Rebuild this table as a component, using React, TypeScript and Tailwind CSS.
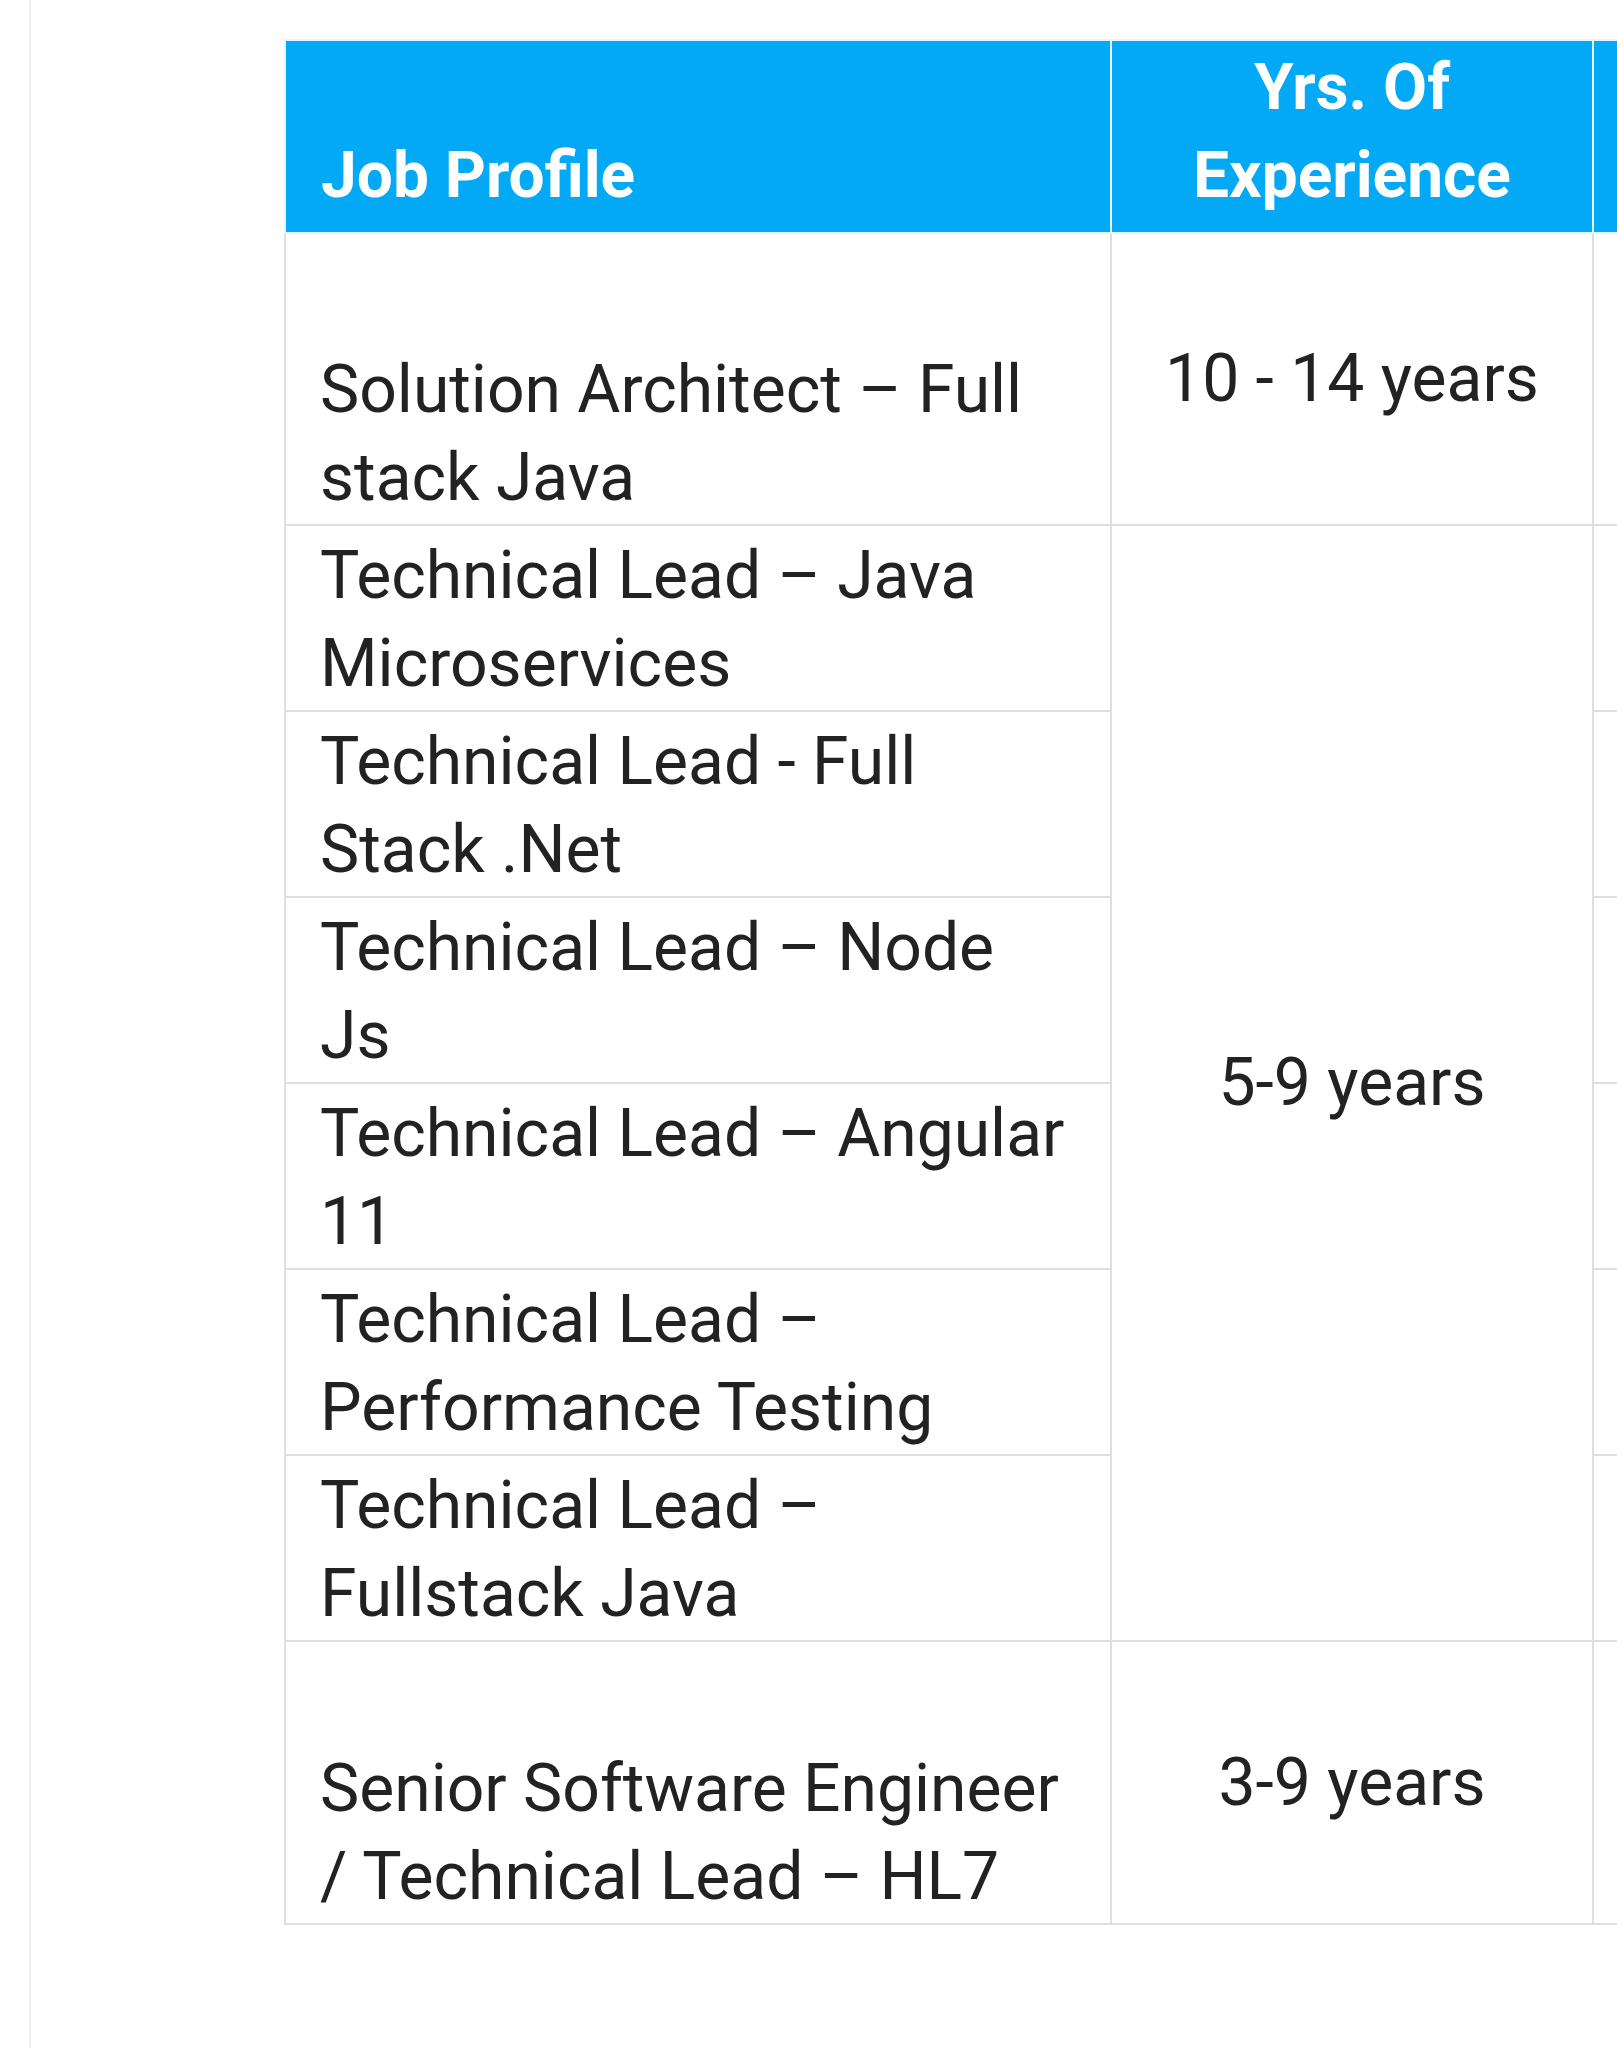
const jobs = [
  "Technical Lead – Java Microservices",
  "Technical Lead - Full Stack .Net",
  "Technical Lead – Node Js",
  "Technical Lead – Angular 11",
  "Technical Lead – Performance Testing",
  "Technical Lead – Fullstack Java",
];

const cell = "border-2 border-[#dedede]";
const jobCell = `${cell} pb-[2px] pl-[34px] pr-[37px] align-bottom`;
const yearsCell = `${cell} text-center align-middle`;

export default function App() {
  return (
    <div className="min-h-screen bg-white font-['Roboto',sans-serif] text-[#222]">
      <div className="ml-[29px] min-h-[2048px] overflow-hidden border-l-2 border-[#efefef] pt-[39px] pl-[253px]">
        <table className="w-[1500px] table-fixed border-collapse text-[66px] leading-[88px]">
          <colgroup>
            <col className="w-[826px]" />
            <col className="w-[482px]" />
            <col />
          </colgroup>
          <thead>
            <tr className="h-[193px] bg-[#03a9f4] text-[64px] font-bold text-white">
              <th className="border-2 border-[#e3f5fd] pb-[12px] pl-[35px] text-left align-bottom">Job Profile</th>
              <th className="border-2 border-[#e3f5fd] pb-[12px] text-center align-bottom">
                Yrs. Of
                <br />
                Experience
              </th>
              <th className="border-2 border-[#e3f5fd]" />
            </tr>
          </thead>
          <tbody>
            <tr className="h-[292px]">
              <td className={jobCell}>Solution Architect – Full stack Java</td>
              <td className={yearsCell}>10 - 14 years</td>
              <td className={cell} />
            </tr>
            {jobs.map((job, i) => (
              <tr key={job} className="h-[186px]">
                <td className={jobCell}>{job}</td>
                {i === 0 && (
                  <td rowSpan={jobs.length} className={yearsCell}>
                    5-9 years
                  </td>
                )}
                <td className={cell} />
              </tr>
            ))}
            <tr className="h-[283px]">
              <td className={jobCell}>Senior Software Engineer / Technical Lead – HL7</td>
              <td className={yearsCell}>3-9 years</td>
              <td className={cell} />
            </tr>
          </tbody>
        </table>
      </div>
    </div>
  );
}
